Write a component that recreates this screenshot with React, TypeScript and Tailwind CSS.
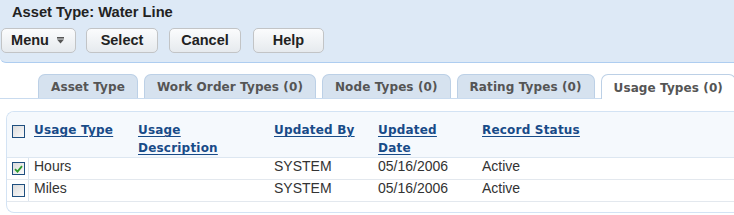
import React from "react";

const sans = { fontFamily: '"Liberation Sans", Arial, sans-serif' };
const verd = { fontFamily: '"DejaVu Sans", Verdana, sans-serif' };

function Btn({ children, className }: { children: React.ReactNode; className: string }) {
  return (
    <button
      className={
        "h-[25px] flex items-center justify-center rounded-[5px] border border-[#c2c4c6] bg-gradient-to-b from-[#fbfcfd] to-[#e6eaee] text-[14.5px] font-bold text-[#222] " +
        className
      }
      style={sans}
    >
      {children}
    </button>
  );
}

function Tab({ label, active }: { label: string; active?: boolean }) {
  return (
    <div
      className={
        active
          ? "shrink-0 whitespace-nowrap h-[25px] -mb-px flex items-center px-[12px] pt-[1px] rounded-t-[7px] border border-b-0 border-[#bcd0e6] bg-white text-[12px] font-bold tracking-[0.1px] text-[#555]"
          : "shrink-0 whitespace-nowrap h-[24px] flex items-center px-[12px] pt-[1px] rounded-t-[7px] border border-b-0 border-[#bcd0e6] bg-[#d6e2ef] text-[12px] font-bold tracking-[0.1px] text-[#555]"
      }
      style={verd}
    >
      {label}
    </div>
  );
}

function Check({ checked }: { checked?: boolean }) {
  return (
    <div className="w-[13px] h-[13px] border border-[#1f4f7f] bg-gradient-to-br from-[#dcdcdc] to-[#fafafa] flex items-center justify-center">
      {checked && (
        <svg width="9" height="8" viewBox="0 0 9 8">
          <path d="M1 4.2 L3.5 6.6 L8 1.2" stroke="#2e9b2e" strokeWidth="1.8" fill="none" />
        </svg>
      )}
    </div>
  );
}

function HeadLink({ lines }: { lines: string[] }) {
  return (
    <div className="flex flex-col items-start pt-[9px] pl-[5px] leading-[18px]">
      {lines.map((l) => (
        <span
          key={l}
          className="whitespace-nowrap underline text-[12px] font-bold tracking-[0.2px] text-[#184b88] decoration-1 underline-offset-[2px]"
          style={verd}
        >
          {l}
        </span>
      ))}
    </div>
  );
}

const rows = [
  { type: "Hours", by: "SYSTEM", date: "05/16/2006", status: "Active", checked: true },
  { type: "Miles", by: "SYSTEM", date: "05/16/2006", status: "Active", checked: false },
];

export default function App() {
  return (
    <div className="w-[734px] h-[215px] overflow-hidden bg-white">
      <div className="h-[63px] bg-[#dde9f6] border-b border-[#aecdf0] rounded-bl-[6px] flex flex-col">
        <div className="pl-[12px] pt-[3px] leading-[18px] text-[14.7px] font-bold text-[#222]" style={sans}>
          Asset Type: Water Line
        </div>
        <div className="flex mt-[7px] pl-[1px]">
          <Btn className="w-[75px] gap-[8px] pr-[2px]">
            <span>Menu</span>
            <svg width="7" height="7" viewBox="0 0 7 7">
              <rect x="0" y="0" width="7" height="1.6" fill="#555" />
              <polygon points="0,2.6 7,2.6 3.5,6.6" fill="#555" />
            </svg>
          </Btn>
          <Btn className="w-[72px] ml-[10px]">Select</Btn>
          <Btn className="w-[72px] ml-[11px]">Cancel</Btn>
          <Btn className="w-[71px] ml-[12px]">Help</Btn>
        </div>
      </div>

      <div className="mt-[11px] flex items-end gap-[6px] pl-[38px] border-b border-[#c9dbef]">
        <Tab label="Asset Type" />
        <Tab label="Work Order Types (0)" />
        <Tab label="Node Types (0)" />
        <Tab label="Rating Types (0)" />
        <Tab label="Usage Types (0)" active />
      </div>

      <div className="mt-[12px] ml-[6px] border-l border-t border-b border-[#d3e3f4] rounded-tl-[8px] rounded-bl-[8px] overflow-hidden">
        <div className="h-[46px] grid grid-cols-[22px_104px_136px_104px_104px_1fr] bg-[#f5f9fd] border-b border-[#dde7f1]">
          <div className="pl-[5px] pt-[13px]">
            <Check />
          </div>
          <HeadLink lines={["Usage Type"]} />
          <HeadLink lines={["Usage", "Description"]} />
          <HeadLink lines={["Updated By"]} />
          <HeadLink lines={["Updated", "Date"]} />
          <HeadLink lines={["Record Status"]} />
        </div>
        {rows.map((r) => (
          <div
            key={r.type}
            className="h-[22px] grid grid-cols-[22px_104px_136px_104px_104px_1fr] border-b border-[#e3e8ee] text-[14px] leading-[16px] text-[#333]"
            style={sans}
          >
            <div className="pl-[5px] flex items-center border-r border-[#dbe5ef]">
              <Check checked={r.checked} />
            </div>
            <div className="pl-[5px]">{r.type}</div>
            <div className="pl-[5px]"></div>
            <div className="pl-[5px]">{r.by}</div>
            <div className="pl-[5px]">{r.date}</div>
            <div className="pl-[5px]">{r.status}</div>
          </div>
        ))}
        <div className="h-[10px]"></div>
      </div>
    </div>
  );
}
